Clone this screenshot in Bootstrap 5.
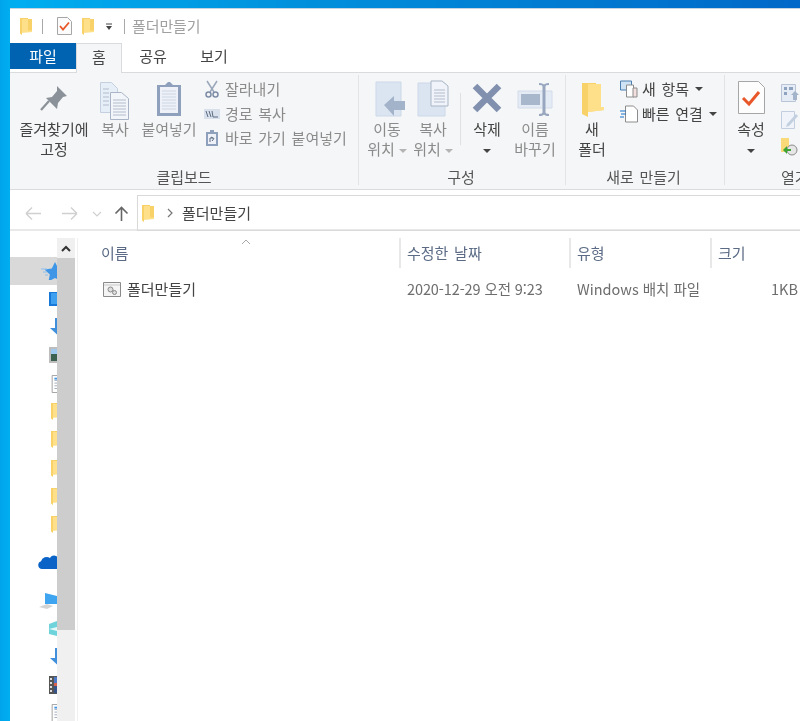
<!DOCTYPE html>
<html lang="ko">
<head>
<meta charset="utf-8">
<title>폴더만들기</title>
<link href="https://cdn.jsdelivr.net/npm/bootstrap@5.3.0/dist/css/bootstrap.min.css" rel="stylesheet">
<style>
html,body{height:100%;overflow:hidden}
body{background:linear-gradient(90deg,#00a4ea 0,#00aef0 10px,#0090dc 300px,#0068c8 800px);font-family:"Noto Sans CJK KR","Liberation Sans",sans-serif;font-size:15px;color:#444;line-height:20px;word-spacing:1.5px}
.fx-win{margin:8px 0 0 10px;height:713px;background:#fff;border-top:1px solid #c6d4e0;display:flex;flex-direction:column;overflow:hidden;filter:blur(.3px)}
.fx-title{height:34px;flex:none;padding-left:10px;color:#a0a0a0;letter-spacing:-.1px}
.fx-vline{width:1px;height:15px;background:#a8a8a8;flex:none}
.fx-tabs{height:30px;flex:none;border-bottom:1px solid #dadbdc;align-items:flex-start}
.fx-tab{height:26px;display:flex;align-items:center;justify-content:center;color:#444;flex:none}
.fx-tab-file{width:66px;background:#0063b1;color:#fff}
.fx-tab-on{width:46px;height:30px;background:#f5f6f7;border:1px solid #dadbdc;border-bottom:0;padding-bottom:3px;position:relative;z-index:1}
.fx-ribbon{height:117px;flex:none;background:#f5f6f7;border-bottom:1px solid #dadbdc;overflow:hidden}
.fx-grp{flex:none;height:110px;margin-top:2px;border-right:1px solid #e2e3e4;position:relative;padding-top:5px;display:flex;align-items:flex-start}
.fx-grp-label{position:absolute;left:0;right:0;top:92px;text-align:center;color:#555;white-space:nowrap}
.fx-big{flex:none;text-align:center;display:flex;flex-direction:column;align-items:center;color:#8b8b8b;line-height:20px}
.fx-big svg{display:block;flex:none;height:46px;margin-bottom:-7px}
.fx-dark{color:#444}
.fx-drop{font-size:0;display:inline-block;border:4px solid transparent;border-top-color:#444;border-bottom:0;vertical-align:middle;margin-left:4px;width:0;height:0}
.fx-drop-off{border-top-color:#b4b4b4}
.fx-small{height:24.5px;display:flex;align-items:center;white-space:nowrap;color:#8b8b8b}
.fx-small svg{flex:none;margin-right:5px}
.fx-stack-a{margin:-3px 0 0 6px}
.fx-stack-b{margin:-3px 0 0 5px}
.fx-stack-b .fx-small{color:#444}
.fx-stack-b svg{margin-right:4px}
.fx-sep{width:1px;height:52px;background:#dfe0e1;margin-top:13px;flex:none}
.fx-nav{height:41px;flex:none;border-bottom:2px solid #e9e9e9;padding-top:5px}
.fx-addr{flex:1;height:36px;border:1px solid #d9d9d9;border-right:0;padding-left:4px;color:#444}
.fx-body{flex:1;min-height:0;padding-top:7px}
.fx-tree{width:47px;flex:none;overflow:hidden;padding-top:19px}
.fx-row{height:28.15px;display:flex;align-items:center;justify-content:flex-end;overflow:hidden}
.fx-row svg{flex:none}
.fx-row-on{background:#d9d9d9}
.fx-gap{margin-top:10px}
.fx-scroll{width:18px;flex:none;background:#f0f0f0;height:100%;display:flex;flex-direction:column}
.fx-up{height:20px;flex:none;display:flex;align-items:center;justify-content:center}
.fx-thumb{height:372px;background:#cdcdcd;flex:none}
.fx-list{flex:1;min-width:0;margin-left:2px;border-left:1px solid #f0f0f0;position:relative}
.fx-head{height:30px;color:#5b6b86;position:relative}
.fx-col{flex:none;height:30px;display:flex;align-items:center;padding-left:6px;border-right:2px solid #e8e8e8}
.fx-col-0{width:323px;padding-left:23px}
.fx-col-1{width:170px}
.fx-col-2{width:141px}
.fx-col-3{flex:1;border-right:0}
.fx-sort{position:absolute;left:163px;top:1px}
.fx-file{height:28px;margin-top:7px;color:#444}
.fx-cell{flex:none;white-space:nowrap;color:#6d6d6d;font-size:14.5px;word-spacing:0}
</style>
</head>
<body>
<svg width="0" height="0" class="position-absolute">
<symbol id="fold" viewBox="0 0 12 17"><path d="M0 0H8V1H12V14L2 14.500V17L0 15.500Z" fill="#f8d268"/><path d="M2 1H8V12.500H12V14L2 14.500Z" fill="#ffe08a"/></symbol>
<symbol id="doc" viewBox="0 0 14 20"><path d="M.5.5h9l4 4v15H.5z" fill="#fff" stroke="#9a9a9a"/><path d="M3 6h8M3 9h8M3 12h8M3 15h8" stroke="#9aa6b8"/><path d="M3 3h4v2H3z" fill="#3d95e8"/></symbol>
</svg>
<div class="fx-win">
  <!-- quick access -->
  <div class="fx-title d-flex align-items-center">
    <svg width="12" height="17" class="me-2"><use href="#fold"/></svg>
    <span class="fx-vline" style="margin:0 14px 0 2px"></span>
    <svg width="15" height="18" viewBox="0 0 15 18" style="margin-right:10px"><path d="M.5.500h10l4 4v13H.5z" fill="#fbfbfb" stroke="#a6a6a6"/><path d="M3 9l3 3.500 6-7" fill="none" stroke="#e8572a" stroke-width="1.800"/></svg>
    <svg width="12" height="17"><use href="#fold"/></svg>
    <svg width="8" height="8" viewBox="0 0 8 8" style="margin:2px 11px 0 11px"><path d="M1 1h6" stroke="#444"/><path d="M1 3h6L4 7z" fill="#444"/></svg>
    <span class="fx-vline" style="margin-right:7px"></span>
    <span>폴더만들기</span>
  </div>
  <!-- tabs -->
  <nav class="fx-tabs d-flex">
    <div class="fx-tab fx-tab-file">파일</div>
    <div class="fx-tab fx-tab-on">홈</div>
    <div class="fx-tab" style="width:62px">공유</div>
    <div class="fx-tab" style="width:60px">보기</div>
  </nav>
  <!-- ribbon -->
  <div class="fx-ribbon d-flex">
    <div class="fx-grp" style="width:349px;padding-left:8px">
      <div class="fx-big fx-dark" style="width:72px">
        <svg width="34" viewBox="0 0 34 46"><path d="M20 6l10 10-4 1-5 6-1 6-11-11 6-1 5-6z" fill="#8a9198"/><path d="M12 21l-8 9" stroke="#8a9198" stroke-width="2.200"/></svg>
        즐겨찾기에<br>고정
      </div>
      <div class="fx-big" style="width:44px;margin-left:3px">
        <svg width="30" viewBox="0 0 30 46"><path d="M.5 2.500h11l6 6v24H.5z" fill="#e6eef8" stroke="#c5d0de"/><path d="M10.500 12.500h11l7 6v21h-18z" fill="#f2f6fb" stroke="#a9b5c6"/><path d="M13 20h13M13 23h13M13 26h13M13 29h13M13 32h13M13 35h13M3 9h6M3 13h6M3 17h6M3 21h6M3 25h6" stroke="#b2bccb"/></svg>
        복사
      </div>
      <div class="fx-big" style="width:58px;margin-left:3px">
        <svg width="26" viewBox="0 0 26 46"><path d="M1 5h24v31H1z" fill="#8fa0bc"/><path d="M4 7h18v26H4z" fill="#eef2f8"/><path d="M6 11h14M6 14h14M6 17h14M6 20h14M6 23h14M6 26h14M6 29h14" stroke="#cdd6e3"/><path d="M9 5l3-3h2l3 3v2H9z" fill="#8fa0bc"/></svg>
        붙여넣기
      </div>
      <div class="fx-stack-a">
        <div class="fx-small"><svg width="16" height="18" viewBox="0 0 16 18"><path d="M3 1l7 11M13 1L6 12" stroke="#9aa7ba" stroke-width="1.500"/><circle cx="4.500" cy="14.500" r="2.500" fill="none" stroke="#7e8ea6" stroke-width="1.500"/><circle cx="11.500" cy="14.500" r="2.500" fill="none" stroke="#7e8ea6" stroke-width="1.500"/></svg>잘라내기</div>
        <div class="fx-small"><svg width="16" height="10" viewBox="0 0 16 10"><path d="M0 0h16v10H0z" fill="#d8e0ec"/><path d="M2 2l2 6M5 2l2 6M8 2l1 6h5" stroke="#5c6b82" fill="none"/></svg>경로 복사</div>
        <div class="fx-small"><svg width="16" height="18" viewBox="0 0 16 18"><path d="M2 3h12v14H2z" fill="#8fa0bc"/><path d="M4 5h8v10H4z" fill="#eef2f8"/><path d="M6 1h4v3H6z" fill="#8fa0bc"/><path d="M6 13V9h3M7 8l3 1.500L8 12" stroke="#5c6b82" fill="none"/></svg>바로 가기 붙여넣기</div>
      </div>
      <div class="fx-grp-label">클립보드</div>
    </div>
    <div class="fx-grp" style="width:207px;padding-left:5px">
      <div class="fx-big" style="width:46px">
        <svg width="34" viewBox="0 0 34 46" style="margin-right:-4px"><path d="M4 2h25v34H4z" fill="#dbe5f2" stroke="#cdd8e8"/><path d="M12 25l10-9v5h11v9H22v6z" fill="#a3b3c9"/></svg>
        <span>이동<br>위치<span class="fx-drop fx-drop-off"></span></span>
      </div>
      <div class="fx-big" style="width:46px">
        <svg width="36" viewBox="0 0 36 46" style="margin-left:4px"><path d="M1 3h27v33H1z" fill="#dbe5f2" stroke="#cdd8e8"/><path d="M14 1h11l6 5v20H14z" fill="#f0f4fa" stroke="#a9b5c6"/><path d="M17 10h11M17 13h11M17 16h11M17 19h11M17 22h11" stroke="#b2bccb"/></svg>
        <span>복사<br>위치<span class="fx-drop fx-drop-off"></span></span>
      </div>
      <span class="fx-sep" style="margin-left:4px"></span>
      <div class="fx-big fx-dark" style="width:50px;margin-left:1px">
        <svg width="30" viewBox="0 0 30 46"><path d="M3 6l24 24M27 6L3 30" stroke="#8090ae" stroke-width="6.500"/></svg>
        <span>삭제<br><span class="fx-drop m-0"></span></span>
      </div>
      <div class="fx-big" style="width:46px">
        <svg width="36" viewBox="0 0 36 46"><path d="M1 11h34v17H1z" fill="#e4ebf5" stroke="#d3dcea"/><path d="M4 14h19v11H4z" fill="#a9b7cc"/><path d="M27 5v29" stroke="#98a7bf" stroke-width="3"/><path d="M22 4c2 0 4 0 5 2 1-2 3-2 5-2M22 35c2 0 4 0 5-2 1 2 3 2 5 2" stroke="#98a7bf" stroke-width="2" fill="none"/></svg>
        이름<br>바꾸기
      </div>
      <div class="fx-grp-label" style="padding-right:2px">구성</div>
    </div>
    <div class="fx-grp" style="width:159px;padding-left:3px">
      <div class="fx-big fx-dark" style="width:46px">
        <svg width="23" viewBox="0 0 23 46"><path d="M1 3h14v1h5v23h3v3L7 32v5l-6-3z" fill="#f8d268"/><path d="M7 4h13v23h3v3L7 32z" fill="#ffe08a"/></svg>
        새<br>폴더
      </div>
      <div class="fx-stack-b">
        <div class="fx-small"><svg width="18" height="18" viewBox="0 0 18 18"><path d="M.5 1h11v9H.5z" fill="#cfe3f5" stroke="#4b7fae"/><path d="M6.500 5h7v12h-7z" fill="#fff" stroke="#8c8c8c"/><path d="M13 8h4v9h-4z" fill="#f4dede" stroke="#8c8c8c"/></svg>새 항목<span class="fx-drop" style="margin-left:6px"></span></div>
        <div class="fx-small"><svg width="18" height="18" viewBox="0 0 18 18"><path d="M5.500 1h8l4 4v12h-12z" fill="#fff" stroke="#8c8c8c"/><path d="M0 6h6M1 9h5M0 12h4" stroke="#1a73c8" stroke-width="1.200"/></svg>빠른 연결<span class="fx-drop" style="margin-left:6px"></span></div>
      </div>
      <div class="fx-grp-label" style="padding-right:3px">새로 만들기</div>
    </div>
    <div class="fx-grp" style="flex:1;border-right:0;padding-left:6px">
      <div class="fx-big fx-dark" style="width:40px;flex:none">
        <svg width="27" viewBox="0 0 27 46"><path d="M.5 1.500h20l6 6v26H.500z" fill="#fdfdfd" stroke="#a6a6a6"/><path d="M5 18l6 6L21 12" fill="none" stroke="#e8572a" stroke-width="3"/></svg>
        <span>속성<br><span class="fx-drop m-0"></span></span>
      </div>
      <div class="d-flex flex-column" style="margin-left:10px;gap:9px;margin-top:4px">
        <svg width="19" height="18" viewBox="0 0 19 18"><path d="M.5 .500h14v17H.500z" fill="#e6ecf5" stroke="#b9c5d6"/><path d="M3 3h3v3H3zM3 8h3v3H3zM8 3h4v3H8z" fill="#8ea3bf"/><path d="M12 16v-5h-2l4-4 4 4h-2v5z" fill="#a3b3c9"/></svg>
        <svg width="19" height="18" viewBox="0 0 19 18"><path d="M.5 .500h13v17H.500z" fill="#f0f4fa" stroke="#c3cede"/><path d="M6 13L15 3l2 2-9 10-3 1z" fill="#c2cfe0"/></svg>
        <svg width="18" height="18" viewBox="0 0 18 18"><path d="M0 0h8v14H0z" fill="#f9d978"/><circle cx="11" cy="12" r="5" fill="#e6e6e6" stroke="#8c8c8c"/><path d="M2 12l4-4v3h4v2H6v3z" fill="#3aa535"/></svg>
      </div>
      <div class="position-absolute" style="left:56px;top:92px;color:#555;white-space:nowrap">열기</div>
    </div>
  </div>
  <!-- nav bar -->
  <div class="fx-nav d-flex align-items-start">
    <svg width="127" height="36" viewBox="0 0 127 36" style="flex:none"><g fill="none"><path d="M16 18.500H31M16 18.500l6-6M16 18.500l6 6" stroke="#d0d0d0" stroke-width="1.400"/><path d="M52 18.500H67M67 18.500l-6-6M67 18.500l-6 6" stroke="#d0d0d0" stroke-width="1.400"/><path d="M83 17l4 4 4-4" stroke="#d0d0d0" stroke-width="1.200"/><path d="M111.500 26V13M105.500 18.500l6-6 6 6" stroke="#666" stroke-width="1.600"/></g></svg>
    <div class="fx-addr d-flex align-items-center">
      <svg width="12" height="17" style="margin-right:13px"><use href="#fold"/></svg>
      <svg width="6" height="10" viewBox="0 0 6 10" style="margin-right:9px"><path d="M1 1l4 4-4 4" fill="none" stroke="#777" stroke-width="1.200"/></svg>
      <span>폴더만들기</span>
    </div>
  </div>
  <!-- body -->
  <div class="fx-body d-flex">
    <div class="fx-tree">
      <div class="fx-row fx-row-on"><svg width="28" height="18" viewBox="0 0 28 18" style="margin-right:-11px"><path d="M15 0l3.200 6.400 7.300 1-5.300 5 1.300 7-6.500-3.400-6.500 3.400 1.300-7-5.300-5 7.300-1z" fill="#3f96e6"/><path d="M1 7h6M3 10h4M5 13h3" stroke="#8cbff0"/></svg></div>
      <div class="fx-row"><svg width="20" height="14" viewBox="0 0 20 14" style="margin-right:-12px"><path d="M0 0h20v14H0z" fill="#1878d8"/><path d="M2 1h16v11H2z" fill="#3fa0f0"/></svg></div>
      <div class="fx-row"><svg width="20" height="18" viewBox="0 0 20 18" style="margin-right:-12px"><path d="M6 0h7v10h5l-8.500 8L1 10h5z" fill="#3f8fdc"/></svg></div>
      <div class="fx-row"><svg width="20" height="16" viewBox="0 0 20 16" style="margin-right:-12px"><path d="M0 0h20v16H0z" fill="#bdbdbd"/><path d="M2 2h16v5H2z" fill="#9fc9ee"/><path d="M2 7h16v7H2z" fill="#3d6150"/></svg></div>
      <div class="fx-row"><svg width="14" height="18" style="margin-right:-8px"><use href="#doc"/></svg></div>
      <div class="fx-row"><svg width="12" height="17" style="margin-right:-6px"><use href="#fold"/></svg></div>
      <div class="fx-row"><svg width="12" height="17" style="margin-right:-6px"><use href="#fold"/></svg></div>
      <div class="fx-row"><svg width="12" height="17" style="margin-right:-6px"><use href="#fold"/></svg></div>
      <div class="fx-row"><svg width="12" height="17" style="margin-right:-6px"><use href="#fold"/></svg></div>
      <div class="fx-row"><svg width="12" height="17" style="margin-right:-6px"><use href="#fold"/></svg></div>
      <div class="fx-row fx-gap"><svg width="20" height="14" viewBox="0 0 20 14" style="margin-right:-1px"><path d="M4 14a4 4 0 0 1-1-7.800A6 6 0 0 1 12 3a4 4 0 0 1 8 4v7z" fill="#0a64c8"/></svg></div>
      <div class="fx-row fx-gap"><svg width="18" height="18" viewBox="0 0 18 18"><path d="M6 1l12 3v8H6z" fill="#3fa5f0"/><path d="M0 15l8-3 6 2-6 3z" fill="#d4d4d4"/></svg></div>
      <div class="fx-row"><svg width="20" height="16" viewBox="0 0 20 16" style="margin-right:-12px"><path d="M0 3l8-3v15l-8-2z" fill="#6fd3dc"/><path d="M0 8l8-2v4z" fill="#e6fafa"/></svg></div>
      <div class="fx-row"><svg width="20" height="18" viewBox="0 0 20 18" style="margin-right:-12px"><path d="M6 0h7v10h5l-8.500 8L1 10h5z" fill="#3f8fdc"/></svg></div>
      <div class="fx-row"><svg width="20" height="18" viewBox="0 0 20 18" style="margin-right:-12px"><path d="M0 0h20v18H0z" fill="#555"/><path d="M5 1h14v6H5z" fill="#4c78c8"/><path d="M5 7h14v3H5z" fill="#d8604c"/><path d="M5 10h14v7H5z" fill="#35558a"/><path d="M2 2v15" stroke="#ddd" stroke-width="2" stroke-dasharray="2 2"/></svg></div>
      <div class="fx-row"><svg width="14" height="18" style="margin-right:-8px"><use href="#doc"/></svg></div>
    </div>
    <div class="fx-scroll">
      <div class="fx-up"><svg width="10" height="7" viewBox="0 0 10 7"><path d="M1 6l4-4 4 4" fill="none" stroke="#333" stroke-width="2"/></svg></div>
      <div class="fx-thumb"></div>
    </div>
    <div class="fx-list">
      <div class="fx-head d-flex">
        <div class="fx-col fx-col-0">이름</div>
        <div class="fx-col fx-col-1">수정한 날짜</div>
        <div class="fx-col fx-col-2">유형</div>
        <div class="fx-col fx-col-3">크기</div>
        <svg class="fx-sort" width="10" height="6" viewBox="0 0 10 6"><path d="M1 5l4-4 4 4" fill="none" stroke="#a8a8a8"/></svg>
      </div>
      <div class="fx-file d-flex align-items-center">
        <div class="fx-cell d-flex align-items-center" style="width:322px;padding-left:25px;color:#444;font-size:15px">
          <svg width="18" height="15" viewBox="0 0 18 15" style="margin-right:6px"><path d="M.5.500h17v14H.500z" fill="#f4f4f4" stroke="#8a8a8a"/><path d="M1 3h16" stroke="#c8c8c8"/><circle cx="7.500" cy="7.500" r="2.500" fill="#ddd" stroke="#8a8a8a"/><circle cx="11.500" cy="10.500" r="2" fill="#ddd" stroke="#8a8a8a"/></svg>폴더만들기
        </div>
        <div class="fx-cell" style="width:170px;padding-left:7px;letter-spacing:-.1px">2020-12-29 오전 9:23</div>
        <div class="fx-cell" style="width:141px;padding-left:7px">Windows 배치 파일</div>
        <div class="fx-cell text-end flex-fill" style="padding-right:2px">1KB</div>
      </div>
    </div>
  </div>
</div>
<script src="https://cdn.jsdelivr.net/npm/bootstrap@5.3.0/dist/js/bootstrap.bundle.min.js"></script>
</body>
</html>
